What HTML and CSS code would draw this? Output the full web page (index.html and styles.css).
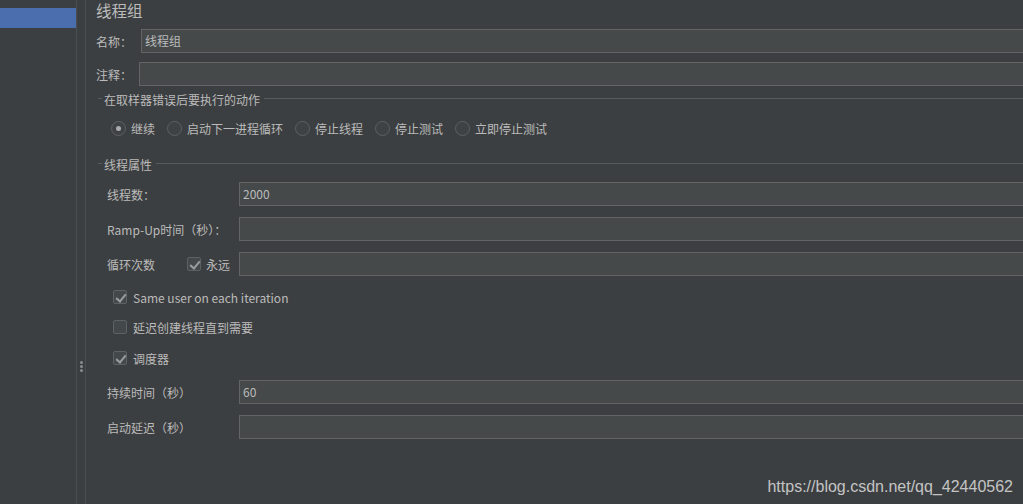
FILE: index.html
```html
<!DOCTYPE html>
<html lang="zh-CN">
<head>
    <meta charset="UTF-8">
    <title>线程组</title>
    <link rel="stylesheet" href="styles.css">
</head>
<body>
    <div class="app">
        <aside class="tree">
            <div class="tree-item selected"></div>
        </aside>

        <div class="splitter">
            <span class="grip"></span>
            <span class="grip"></span>
            <span class="grip"></span>
        </div>

        <main class="panel">
            <div class="panel-title">线程组</div>

            <div class="field-row name-row">
                <label>名称：</label>
                <div class="input">线程组</div>
            </div>
            <div class="field-row comment-row">
                <label>注释：</label>
                <div class="input"></div>
            </div>

            <!-- 取样器错误 -->
            <div class="group-title"><span>在取样器错误后要执行的动作</span></div>
            <div class="radio-row">
                <span class="radio checked"></span><span class="opt">继续</span>
                <span class="radio"></span><span class="opt">启动下一进程循环</span>
                <span class="radio"></span><span class="opt">停止线程</span>
                <span class="radio"></span><span class="opt">停止测试</span>
                <span class="radio"></span><span class="opt">立即停止测试</span>
            </div>

            <!-- 线程属性 -->
            <div class="group-title second"><span>线程属性</span></div>
            <div class="group-body">
                <div class="prop-row first">
                    <label>线程数：</label>
                    <div class="input">2000</div>
                </div>
                <div class="prop-row">
                    <label>Ramp-Up时间（秒）：</label>
                    <div class="input"></div>
                </div>
                <div class="prop-row">
                    <label class="short">循环次数</label>
                    <span class="check checked"></span>
                    <span class="forever">永远</span>
                    <div class="input"></div>
                </div>

                <div class="check-row">
                    <span class="check checked"></span><span>Same user on each iteration</span>
                </div>
                <div class="check-row">
                    <span class="check"></span><span>延迟创建线程直到需要</span>
                </div>
                <div class="check-row">
                    <span class="check checked"></span><span>调度器</span>
                </div>

                <div class="prop-row after-checks">
                    <label>持续时间（秒）</label>
                    <div class="input">60</div>
                </div>
                <div class="prop-row">
                    <label>启动延迟（秒）</label>
                    <div class="input"></div>
                </div>
            </div>
        </main>
    </div>

    <div class="watermark">https://blog.csdn.net/qq_42440562</div>
</body>
</html>
```

FILE: styles.css
```css
/* Reset */
* {
    margin: 0;
    padding: 0;
    box-sizing: border-box;
}

body {
    font-family: "Noto Sans CJK SC", "Noto Sans", sans-serif;
    font-size: 12px;
    background-color: #3c3f41;
    color: #bbbbbb;
    width: 1023px;
    height: 504px;
    overflow: hidden;
}

.app {
    display: flex;
    height: 504px;
}

/* Arvore da esquerda */
.tree {
    width: 77px;
    border-right: 1px solid #4b4e50;
    padding-top: 8px;
}

.tree-item.selected {
    height: 20px;
    background-color: #4b6eaf;
}

.splitter {
    width: 9px;
    border-right: 1px solid #4b4e50;
    display: flex;
    flex-direction: column;
    align-items: center;
    justify-content: center;
    gap: 1px;
    padding-top: 228px;
}

.grip {
    width: 3px;
    height: 3px;
    border-radius: 50%;
    background-color: #8a8d8f;
}

/* Painel principal */
.panel {
    flex: 1;
    padding-left: 10px;
    overflow: hidden;
}

.panel-title {
    font-size: 15.5px;
    height: 29px;
    line-height: 21px;
}

.field-row {
    display: flex;
    align-items: center;
    height: 24px;
}

.field-row label {
    width: 45px;
}

.comment-row {
    margin-top: 9px;
}

.comment-row label {
    width: 43px;
}

.input {
    flex: 1;
    height: 24px;
    background-color: #45494a;
    border: 1px solid #646464;
    border-right: none;
    padding-left: 3px;
    line-height: 22px;
}

/* Titulos dos grupos */
.group-title {
    display: flex;
    align-items: center;
    height: 16px;
    margin-top: 5px;
    margin-left: 2px;
}

.group-title::before {
    content: "";
    width: 4px;
    border-top: 1px solid #565a5c;
    margin-right: 2px;
    margin-top: -1px;
}

.group-title::after {
    content: "";
    flex: 1;
    border-top: 1px solid #565a5c;
    margin-left: 4px;
    margin-top: -1px;
}

.group-title.second {
    margin-top: 18px;
}

.radio-row {
    display: flex;
    align-items: center;
    height: 20px;
    margin-top: 11px;
    padding-left: 15px;
}

.radio {
    width: 15px;
    height: 15px;
    border-radius: 50%;
    border: 1px solid #5e6162;
    background-color: #3f4244;
    display: flex;
    align-items: center;
    justify-content: center;
    margin-right: 5px;
}

.radio.checked::after {
    content: "";
    width: 5px;
    height: 5px;
    border-radius: 50%;
    background-color: #a9abac;
}

.opt {
    margin-right: 12px;
}

/* Propriedades */
.group-body {
    padding-left: 11px;
}

.prop-row {
    display: flex;
    align-items: center;
    height: 24px;
    margin-top: 11px;
}

.prop-row.first {
    margin-top: 10px;
}

.prop-row.after-checks {
    margin-top: 12px;
}

.prop-row label {
    width: 132px;
}

.prop-row label.short {
    width: 80px;
}

.forever {
    margin-left: 5px;
    width: 33px;
}

.check {
    width: 14px;
    height: 14px;
    border: 1px solid #5e6162;
    border-radius: 2px;
    background-color: #43494a;
    position: relative;
}

.check.checked::after {
    content: "";
    position: absolute;
    left: 4px;
    top: 1px;
    width: 4px;
    height: 8px;
    border-right: 2px solid #9a9c9d;
    border-bottom: 2px solid #9a9c9d;
    transform: rotate(40deg);
}

.check-row {
    display: flex;
    align-items: center;
    height: 20px;
    margin-top: 10px;
    padding-left: 6px;
}

.check-row:nth-of-type(4),
.check-row:nth-of-type(6) {
    margin-top: 11px;
}

.check-row .check {
    margin-right: 6px;
}

/* Marca d'agua */
.watermark {
    position: absolute;
    right: 10px;
    bottom: 8px;
    font-family: "Liberation Sans", Arial, sans-serif;
    font-size: 16px;
    color: #c4c4c4;
}
```
